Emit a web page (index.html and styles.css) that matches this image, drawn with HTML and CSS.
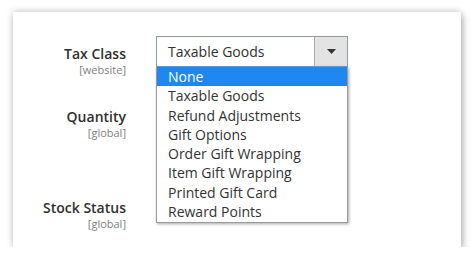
FILE: index.html
```html
<!DOCTYPE html>
<html>
<head>
<meta charset="utf-8">
<link rel="stylesheet" href="styles.css">
</head>
<body>
<div class="card">
  <div class="row">
    <div class="label"><span class="name">Tax Class</span><span class="scope">[website]</span></div>
    <div class="control">
      <div class="select">
        <span class="value">Taxable Goods</span>
        <span class="btn"><svg width="9" height="5" viewBox="0 0 9 5"><path d="M0 0h9L4.5 5z" fill="#333"/></svg></span>
      </div>
      <ul class="list">
        <li class="active">None</li>
        <li>Taxable Goods</li>
        <li>Refund Adjustments</li>
        <li>Gift Options</li>
        <li>Order Gift Wrapping</li>
        <li>Item Gift Wrapping</li>
        <li>Printed Gift Card</li>
        <li>Reward Points</li>
      </ul>
    </div>
  </div>
  <div class="row row-qty">
    <div class="label"><span class="name">Quantity</span><span class="scope">[global]</span></div>
    <div class="control"></div>
  </div>
  <div class="row row-stock">
    <div class="label"><span class="name">Stock Status</span><span class="scope">[global]</span></div>
    <div class="control"></div>
  </div>
</div>
</body>
</html>
```
FILE: styles.css
```css
html, body {
  margin: 0;
  padding: 0;
  background: #fff;
}
body {
  font-family: "Open Sans", "DejaVu Sans", sans-serif;
  color: #303030;
  padding: 12px 13px 0 13px;
  width: 448px;
}
.card {
  width: 448px;
  height: 235px;
  box-sizing: border-box;
  background: #fff;
  box-shadow: 2px 3px 7px rgba(0,0,0,0.28), -1px -2px 6px rgba(0,0,0,0.12);
  padding-top: 24px;
}
.row {
  display: grid;
  grid-template-columns: 113px 192px;
  column-gap: 30px;
}
.row-qty { margin-top: 22px; }
.row-stock { margin-top: 50px; }
.label {
  padding-top: 8px;
  display: flex;
  flex-direction: column;
  align-items: flex-end;
  text-align: right;
}
.name {
  font-size: 14px;
  font-weight: 600;
  line-height: 19px;
  color: #303030;
}
.scope {
  font-size: 11px;
  line-height: 14px;
  color: #808080;
}
.control {
  position: relative;
}
.select {
  height: 31px;
  box-sizing: border-box;
  border: 1px solid #8f9ba6;
  display: flex;
  align-items: center;
  background: #fff;
}
.value {
  flex: 1;
  padding-left: 11px;
  font-size: 14px;
  color: #303030;
}
.btn {
  width: 32px;
  align-self: stretch;
  background: #e3e3e3;
  border-left: 1px solid #adadad;
  display: flex;
  align-items: center;
  justify-content: center;
}
.list {
  position: absolute;
  top: 31px;
  left: 0;
  width: 192px;
  box-sizing: border-box;
  margin: 0;
  padding: 0 0 1px 0;
  list-style: none;
  background: #fff;
  border: 1px solid #9a9a9a;
  border-top: none;
  box-shadow: 1px 1px 3px rgba(0,0,0,0.35);
  z-index: 2;
}
.list li {
  height: 19.3px;
  line-height: 19.3px;
  padding-left: 11px;
  font-size: 14px;
  color: #333;
}
.list li.active {
  background: #1e88f0;
  color: #fff;
}
```
